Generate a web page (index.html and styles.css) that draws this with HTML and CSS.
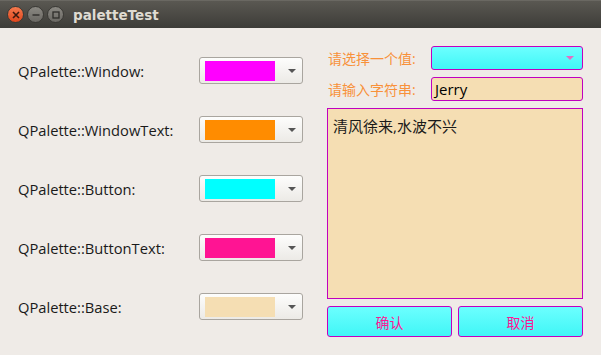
FILE: index.html
```html
<!DOCTYPE html>
<html lang="en">
<head>
    <meta charset="UTF-8">
    <title>paletteTest</title>
    <link rel="stylesheet" href="styles.css">
</head>
<body>
    <div class="window">
        <div class="titlebar">
            <span class="wbtn close">
                <svg width="8" height="8" viewBox="0 0 8 8"><path d="M1 1L7 7M7 1L1 7" stroke="#3a1a10" stroke-width="1.6"/></svg>
            </span>
            <span class="wbtn">
                <svg width="8" height="8" viewBox="0 0 8 8"><path d="M0.5 4H7.5" stroke="#2e2d2a" stroke-width="1.4"/></svg>
            </span>
            <span class="wbtn">
                <svg width="8" height="8" viewBox="0 0 8 8"><rect x="1" y="1" width="6" height="6" fill="none" stroke="#2e2d2a" stroke-width="1.3"/></svg>
            </span>
            <span class="title">paletteTest</span>
        </div>

        <div class="content">
            <div class="left">
                <div class="row">
                    <label>QPalette::Window:</label>
                    <div class="color-combo"><span class="swatch" style="background:#ff00ff"></span><span class="arrow"></span></div>
                </div>
                <div class="row">
                    <label>QPalette::WindowText:</label>
                    <div class="color-combo"><span class="swatch" style="background:#ff8c00"></span><span class="arrow"></span></div>
                </div>
                <div class="row">
                    <label>QPalette::Button:</label>
                    <div class="color-combo"><span class="swatch" style="background:#00ffff"></span><span class="arrow"></span></div>
                </div>
                <div class="row">
                    <label>QPalette::ButtonText:</label>
                    <div class="color-combo"><span class="swatch" style="background:#ff1493"></span><span class="arrow"></span></div>
                </div>
                <div class="row">
                    <label>QPalette::Base:</label>
                    <div class="color-combo"><span class="swatch" style="background:#f5deb3"></span><span class="arrow"></span></div>
                </div>
            </div>

            <div class="right">
                <div class="form-row">
                    <label>请选择一个值:</label>
                    <div class="value-combo"><span class="arrow pink"></span></div>
                </div>
                <div class="form-row">
                    <label>请输入字符串:</label>
                    <div class="line-edit">Jerry</div>
                </div>
                <div class="text-edit">清风徐来,水波不兴</div>
                <div class="buttons">
                    <button>确认</button>
                    <button>取消</button>
                </div>
            </div>
        </div>
    </div>
</body>
</html>
```

FILE: styles.css
```css
body {
    margin: 0;
    font-family: "Open Sans", "Noto Sans CJK SC", sans-serif;
    background: #efebe7;
}
.window {
    width: 601px;
    height: 355px;
    display: flex;
    flex-direction: column;
}
.titlebar {
    height: 28px;
    flex: none;
    display: flex;
    align-items: center;
    padding-left: 7px;
    background: linear-gradient(#5a5852, #3d3c38);
    border-top: 1px solid #6a6862;
    box-sizing: border-box;
}
.wbtn {
    width: 17px;
    height: 17px;
    border-radius: 50%;
    margin-right: 3px;
    display: flex;
    align-items: center;
    justify-content: center;
    background: linear-gradient(#8a8882, #6a6863);
    border: 1px solid #3a3935;
    box-sizing: border-box;
}
.wbtn.close {
    background: linear-gradient(#f47a4e, #e0461d);
}
.title {
    margin-left: 6px;
    color: #dfdbd2;
    font-family: "DejaVu Sans", sans-serif;
    font-weight: bold;
    font-size: 13.5px;
}
.content {
    flex: 1;
    display: flex;
    padding: 18px 18px 0 18px;
    gap: 24px;
}
.left {
    width: 285px;
    display: flex;
    flex-direction: column;
    gap: 32px;
    padding-top: 11px;
}
.row {
    display: flex;
    align-items: center;
    justify-content: space-between;
    height: 27px;
}
.row label {
    font-size: 14.7px;
    color: #1a1a1a;
}
.color-combo {
    width: 104px;
    height: 27px;
    box-sizing: border-box;
    border: 1px solid #a9a59f;
    border-radius: 3px;
    background: linear-gradient(#fdfdfc, #eceae6);
    display: flex;
    align-items: center;
    padding-left: 5px;
}
.swatch {
    width: 70px;
    height: 20px;
}
.arrow {
    margin-left: 13px;
    width: 0;
    height: 0;
    border-left: 4px solid transparent;
    border-right: 4px solid transparent;
    border-top: 4px solid #555;
}
.arrow.pink {
    margin-left: auto;
    margin-right: 8px;
    border-top-color: #e46cc4;
}
.right {
    flex: 1;
    display: flex;
    flex-direction: column;
    gap: 7px;
}
.form-row {
    display: flex;
    align-items: center;
    justify-content: space-between;
}
.form-row label {
    color: #f8913a;
    font-size: 14px;
    padding-left: 1px;
}
.value-combo, .line-edit {
    width: 152px;
    height: 24px;
    box-sizing: border-box;
    border: 1px solid #c000c0;
    border-radius: 3px;
    display: flex;
    align-items: center;
}
.value-combo {
    background: linear-gradient(#6cffff, #40f6f6);
}
.line-edit {
    background: #f5deb3;
    padding-left: 3px;
    font-size: 15px;
    color: #000;
}
.text-edit {
    height: 191px;
    box-sizing: border-box;
    border: 1px solid #c000c0;
    background: #f5deb3;
    padding: 6px 5px;
    font-size: 15px;
    color: #1a1a1a;
}
.buttons {
    display: flex;
    gap: 6px;
}
.buttons button {
    flex: 1;
    height: 31px;
    border: 1px solid #c000c0;
    border-radius: 3px;
    background: linear-gradient(#6cffff, #40f6f6);
    color: #ff1493;
    font-family: "Noto Sans CJK SC", sans-serif;
    font-size: 14px;
}
```
